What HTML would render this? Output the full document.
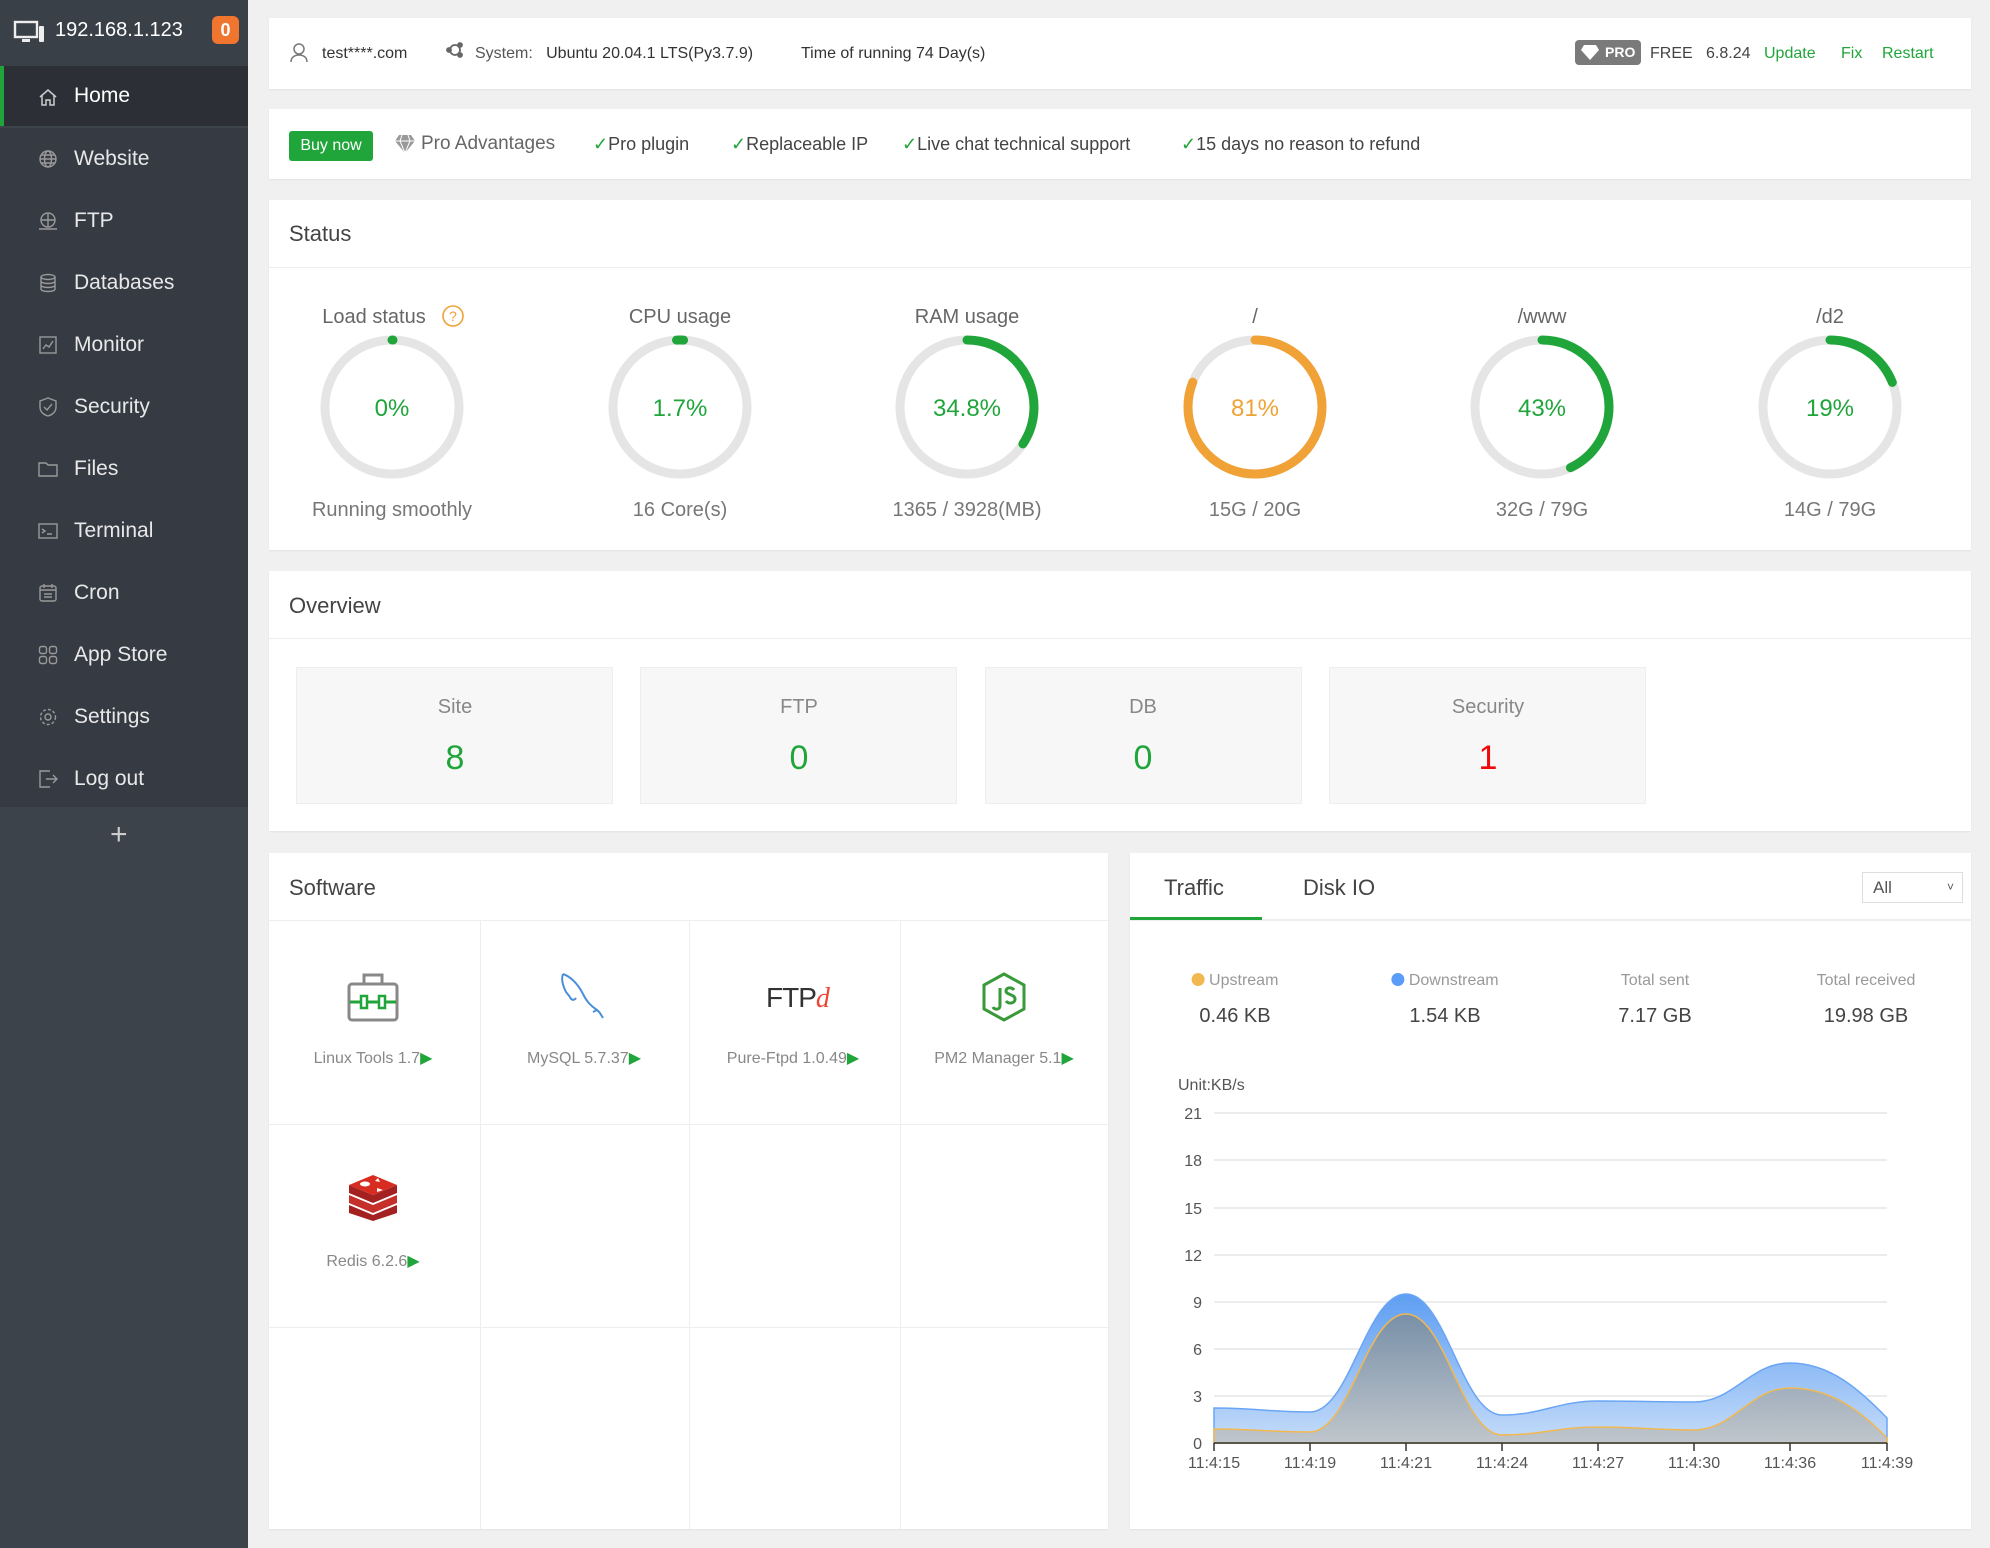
<!DOCTYPE html>
<html><head><meta charset="utf-8">
<style>
*{margin:0;padding:0;box-sizing:border-box}
body{width:1990px;height:1548px;background:#f0f0f0;font-family:"Liberation Sans",sans-serif;position:relative;overflow:hidden;color:#555}
.a{position:absolute;white-space:nowrap}
.card{position:absolute;background:#fff;box-shadow:0 1px 2px rgba(0,0,0,.06)}
#side{position:absolute;left:0;top:0;width:248px;height:1548px;background:#3d434b}
.nav{position:absolute;left:0;width:248px;height:62px;background:#363b43;color:#e8e8e8;font-size:21px;line-height:62px;padding-left:74px}
.nav svg{position:absolute;left:38px;top:21px}
.ct{text-align:center;transform:translateX(-50%)}
.hd{font-size:22px;color:#444}
.line{position:absolute;height:1px;background:#eceef0}
.g{color:#20a53a}
</style></head><body>
<div id="side">
 <div class="a" style="left:0;top:0;width:248px;height:66px;background:#3a4048"></div>
 <svg class="a" style="left:13px;top:20px" width="34" height="26" viewBox="0 0 34 26"><rect x="2" y="2" width="22" height="15" fill="none" stroke="#eee" stroke-width="2.4"/><rect x="9" y="19" width="8" height="3" fill="#eee"/><rect x="26" y="6" width="5" height="16" rx="1" fill="#eee"/></svg>
 <div class="a" style="left:55px;top:19px;font-size:20px;color:#fff">192.168.1.123</div>
 <div class="a" style="left:212px;top:16px;width:27px;height:28px;border-radius:6px;background:#f0752f;color:#fff;font-size:18px;font-weight:bold;text-align:center;line-height:28px">0</div>
 <div class="nav" style="top:66px;height:60px;background:#2c3036;border-left:4px solid #20a53a;padding-left:70px;color:#fff;line-height:60px"><svg style="left:34px" width="20" height="20" viewBox="0 0 20 20" fill="none" stroke="#ccc" stroke-width="1.5"><path d="M2 10 10 3l8 7M4 8v10h4v-5h4v5h4V8"/></svg>Home</div>
 <div class="nav" style="top:128px"><svg width="20" height="20" viewBox="0 0 20 20" fill="none" stroke="#999" stroke-width="1.4"><circle cx="10" cy="10" r="8"/><ellipse cx="10" cy="10" rx="3.5" ry="8"/><path d="M2 10h16M3.5 6h13M3.5 14h13"/></svg>Website</div>
 <div class="nav" style="top:190px"><svg width="20" height="20" viewBox="0 0 20 20" fill="none" stroke="#999" stroke-width="1.4"><circle cx="10" cy="9" r="7"/><path d="M3 9h14M10 2v14M1 18h18"/></svg>FTP</div>
 <div class="nav" style="top:252px"><svg width="20" height="20" viewBox="0 0 20 20" fill="none" stroke="#999" stroke-width="1.4"><ellipse cx="10" cy="4" rx="7" ry="2.5"/><path d="M3 4v12c0 1.5 3 2.5 7 2.5s7-1 7-2.5V4M3 8c0 1.5 3 2.5 7 2.5s7-1 7-2.5M3 12c0 1.5 3 2.5 7 2.5s7-1 7-2.5"/></svg>Databases</div>
 <div class="nav" style="top:314px"><svg width="20" height="20" viewBox="0 0 20 20" fill="none" stroke="#999" stroke-width="1.4"><rect x="2" y="2" width="16" height="16"/><path d="M5 14l3-4 3 2 4-6"/></svg>Monitor</div>
 <div class="nav" style="top:376px"><svg width="20" height="20" viewBox="0 0 20 20" fill="none" stroke="#999" stroke-width="1.4"><path d="M10 1 2 4v6c0 5 4 8 8 9 4-1 8-4 8-9V4z"/><path d="M6 10l3 3 5-6"/></svg>Security</div>
 <div class="nav" style="top:438px"><svg width="20" height="20" viewBox="0 0 20 20" fill="none" stroke="#999" stroke-width="1.4"><path d="M1 4h7l2 2h9v11H1z"/></svg>Files</div>
 <div class="nav" style="top:500px"><svg width="20" height="20" viewBox="0 0 20 20" fill="none" stroke="#999" stroke-width="1.4"><rect x="1" y="3" width="18" height="14"/><path d="M4 8l3 2-3 2M9 13h5"/></svg>Terminal</div>
 <div class="nav" style="top:562px"><svg width="20" height="20" viewBox="0 0 20 20" fill="none" stroke="#999" stroke-width="1.4"><rect x="2" y="3" width="16" height="15" rx="2"/><path d="M2 7h16M6 1v4M14 1v4M6 11h8M6 14h8"/></svg>Cron</div>
 <div class="nav" style="top:624px"><svg width="20" height="20" viewBox="0 0 20 20" fill="none" stroke="#999" stroke-width="1.4"><rect x="1.5" y="1.5" width="7" height="7" rx="2"/><rect x="11.5" y="1.5" width="7" height="7" rx="2"/><rect x="1.5" y="11.5" width="7" height="7" rx="2"/><rect x="11.5" y="11.5" width="7" height="7" rx="2"/></svg>App Store</div>
 <div class="nav" style="top:686px"><svg width="20" height="20" viewBox="0 0 20 20" fill="none" stroke="#999" stroke-width="1.4"><circle cx="10" cy="10" r="3"/><circle cx="10" cy="10" r="7.5" stroke-dasharray="3 2"/></svg>Settings</div>
 <div class="nav" style="top:748px;height:59px"><svg width="20" height="20" viewBox="0 0 20 20" fill="none" stroke="#999" stroke-width="1.4"><path d="M12 2H2v16h10M8 10h11M15 6l4 4-4 4"/></svg>Log out</div>
 <div class="a" style="left:110px;top:818px;font-size:30px;color:#ccc">+</div>
</div>

<!-- top bar -->
<div class="card" style="left:269px;top:18px;width:1702px;height:71px"></div>
<svg class="a" style="left:290px;top:43px" width="18" height="20" viewBox="0 0 18 20" fill="none" stroke="#777" stroke-width="1.5"><circle cx="9" cy="6" r="5"/><path d="M1 19c0-5 4-7 8-7s8 2 8 7"/></svg>
<div class="a" style="left:322px;top:45px;font-size:16px;color:#333">test****.com</div>
<svg class="a" style="left:446px;top:41px" width="18" height="18" viewBox="0 0 18 18" fill="none" stroke="#666" stroke-width="1.8"><circle cx="9" cy="9" r="5"/><circle cx="14" cy="4" r="2" fill="#666"/><circle cx="3" cy="9" r="2" fill="#666"/><circle cx="14" cy="14" r="2" fill="#666"/></svg>
<div class="a" style="left:475px;top:45px;font-size:16px;color:#555">System:&nbsp;&nbsp; <span style="color:#333">Ubuntu 20.04.1 LTS(Py3.7.9)</span></div>
<div class="a" style="left:801px;top:45px;font-size:16px;color:#333">Time of running 74 Day(s)</div>
<div class="a" style="left:1575px;top:40px;width:66px;height:25px;background:#7a7a7a;border-radius:4px;color:#fff;font-size:14px;font-weight:bold;line-height:25px;padding-left:30px">PRO</div>
<svg class="a" style="left:1581px;top:45px" width="18" height="15" viewBox="0 0 18 15"><path d="M3 0h12l3 5-9 10L0 5z" fill="#fff"/></svg>
<div class="a" style="left:1650px;top:45px;font-size:16px;color:#444">FREE&nbsp;&nbsp; 6.8.24</div>
<div class="a g" style="left:1764px;top:45px;font-size:16px">Update</div>
<div class="a g" style="left:1841px;top:45px;font-size:16px">Fix</div>
<div class="a g" style="left:1882px;top:45px;font-size:16px">Restart</div>

<!-- buy row -->
<div class="card" style="left:269px;top:109px;width:1702px;height:70px"></div>
<div class="a" style="left:289px;top:131px;width:84px;height:30px;background:#20a53a;border-radius:3px;color:#fff;font-size:16px;line-height:30px;text-align:center">Buy now</div>
<svg class="a" style="left:394px;top:134px" width="22" height="20" viewBox="0 0 22 20"><path d="M5 1h12l4 6-10 12L1 7z" fill="#999"/><path d="M1 7h20M8 1 6 7l5 12 5-12-2-6" stroke="#fff" fill="none" stroke-width="1"/></svg>
<div class="a" style="left:421px;top:133px;font-size:19px;color:#666">Pro Advantages</div>
<div class="a" style="left:593px;top:134px;font-size:18px;color:#444"><span class="g">✓</span>Pro plugin</div>
<div class="a" style="left:731px;top:134px;font-size:18px;color:#444"><span class="g">✓</span>Replaceable IP</div>
<div class="a" style="left:902px;top:134px;font-size:18px;color:#444"><span class="g">✓</span>Live chat technical support</div>
<div class="a" style="left:1181px;top:134px;font-size:18px;color:#444"><span class="g">✓</span>15 days no reason to refund</div>

<!-- status -->
<div class="card" style="left:269px;top:200px;width:1702px;height:350px"></div>
<div class="a hd" style="left:289px;top:221px">Status</div>
<div class="line" style="left:269px;top:267px;width:1702px"></div>
<svg class="a" style="left:269px;top:200px" width="1702" height="350">
 <g font-family="Liberation Sans, sans-serif" text-anchor="middle">
 <g transform="translate(123,207)"><circle r="67" fill="none" stroke="#e5e5e5" stroke-width="9"/><circle r="67" fill="none" stroke="#20a53a" stroke-width="9" stroke-linecap="round" stroke-dasharray="1 500" transform="rotate(-90)"/><text y="9" font-size="24" fill="#20a53a">0%</text><text y="-84" x="-18" font-size="20" fill="#666">Load status</text><circle cx="61" cy="-91" r="10" fill="none" stroke="#f0a236" stroke-width="1.6"/><text x="61" y="-86" font-size="14" fill="#f0a236">?</text><text y="109" font-size="20" fill="#777">Running smoothly</text></g>
 <g transform="translate(411,207)"><circle r="67" fill="none" stroke="#e5e5e5" stroke-width="9"/><circle r="67" fill="none" stroke="#20a53a" stroke-width="9" stroke-linecap="round" stroke-dasharray="7.1 500" transform="rotate(-93)"/><text y="9" font-size="24" fill="#20a53a">1.7%</text><text y="-84" font-size="20" fill="#666">CPU usage</text><text y="109" font-size="20" fill="#777">16 Core(s)</text></g>
 <g transform="translate(698,207)"><circle r="67" fill="none" stroke="#e5e5e5" stroke-width="9"/><circle r="67" fill="none" stroke="#20a53a" stroke-width="9" stroke-linecap="round" stroke-dasharray="144.3 500" transform="rotate(-90)"/><text y="9" font-size="24" fill="#20a53a">34.8%</text><text y="-84" font-size="20" fill="#666">RAM usage</text><text y="109" font-size="20" fill="#777">1365 / 3928(MB)</text></g>
 <g transform="translate(986,207)"><circle r="67" fill="none" stroke="#e5e5e5" stroke-width="9"/><circle r="67" fill="none" stroke="#f0a236" stroke-width="9" stroke-linecap="round" stroke-dasharray="341 500" transform="rotate(-90)"/><text y="9" font-size="24" fill="#f0a236">81%</text><text y="-84" font-size="20" fill="#666">/</text><text y="109" font-size="20" fill="#777">15G / 20G</text></g>
 <g transform="translate(1273,207)"><circle r="67" fill="none" stroke="#e5e5e5" stroke-width="9"/><circle r="67" fill="none" stroke="#20a53a" stroke-width="9" stroke-linecap="round" stroke-dasharray="181 500" transform="rotate(-90)"/><text y="9" font-size="24" fill="#20a53a">43%</text><text y="-84" font-size="20" fill="#666">/www</text><text y="109" font-size="20" fill="#777">32G / 79G</text></g>
 <g transform="translate(1561,207)"><circle r="67" fill="none" stroke="#e5e5e5" stroke-width="9"/><circle r="67" fill="none" stroke="#20a53a" stroke-width="9" stroke-linecap="round" stroke-dasharray="80 500" transform="rotate(-90)"/><text y="9" font-size="24" fill="#20a53a">19%</text><text y="-84" font-size="20" fill="#666">/d2</text><text y="109" font-size="20" fill="#777">14G / 79G</text></g>
 </g>
</svg>

<!-- overview -->
<div class="card" style="left:269px;top:571px;width:1702px;height:260px"></div>
<div class="a hd" style="left:289px;top:593px">Overview</div>
<div class="line" style="left:269px;top:638px;width:1702px"></div>
<div class="a" style="left:296px;top:667px;width:317px;height:137px;background:#f7f7f7;border:1px solid #eee"></div>
<div class="a" style="left:640px;top:667px;width:317px;height:137px;background:#f7f7f7;border:1px solid #eee"></div>
<div class="a" style="left:985px;top:667px;width:317px;height:137px;background:#f7f7f7;border:1px solid #eee"></div>
<div class="a" style="left:1329px;top:667px;width:317px;height:137px;background:#f7f7f7;border:1px solid #eee"></div>
<div class="a ct" style="left:455px;top:696px;font-size:20px;color:#888">Site</div>
<div class="a ct" style="left:799px;top:696px;font-size:20px;color:#888">FTP</div>
<div class="a ct" style="left:1143px;top:696px;font-size:20px;color:#888">DB</div>
<div class="a ct" style="left:1488px;top:696px;font-size:20px;color:#888">Security</div>
<div class="a ct g" style="left:455px;top:739px;font-size:34px">8</div>
<div class="a ct g" style="left:799px;top:739px;font-size:34px">0</div>
<div class="a ct g" style="left:1143px;top:739px;font-size:34px">0</div>
<div class="a ct" style="left:1488px;top:739px;font-size:34px;color:#ef0808">1</div>

<!-- software -->
<div class="card" style="left:269px;top:853px;width:839px;height:676px"></div>
<div class="a hd" style="left:289px;top:875px">Software</div>
<div class="line" style="left:269px;top:920px;width:839px"></div>
<div class="line" style="left:269px;top:1124px;width:839px"></div>
<div class="line" style="left:269px;top:1327px;width:839px"></div>
<div class="a" style="left:480px;top:921px;width:1px;height:608px;background:#eceef0"></div>
<div class="a" style="left:689px;top:921px;width:1px;height:608px;background:#eceef0"></div>
<div class="a" style="left:900px;top:921px;width:1px;height:608px;background:#eceef0"></div>
<svg class="a" style="left:347px;top:972px" width="52" height="50" viewBox="0 0 52 50"><rect x="2" y="12" width="48" height="36" rx="3" fill="none" stroke="#888" stroke-width="3"/><path d="M17 12V3h18v9" fill="none" stroke="#888" stroke-width="3"/><path d="M3 30h46" stroke="#20a53a" stroke-width="3"/><rect x="14" y="24" width="6" height="12" fill="#fff" stroke="#20a53a" stroke-width="2.5"/><rect x="32" y="24" width="6" height="12" fill="#fff" stroke="#20a53a" stroke-width="2.5"/></svg>
<div class="a ct" style="left:373px;top:1048px;font-size:16px;color:#888">Linux Tools 1.7<span class="g">▶</span></div>
<svg class="a" style="left:559px;top:972px" width="50" height="50" viewBox="0 0 50 50" fill="none" stroke="#4a90d9" stroke-width="2"><path d="M4 2c6 2 14 8 20 20 4 8 8 12 14 16 3 2 4 5 6 8M4 2c-2 5 0 12 3 18l4 5M11 25c1 3 4 4 6 1M38 38l-4 2"/></svg>
<div class="a ct" style="left:584px;top:1048px;font-size:16px;color:#888">MySQL 5.7.37<span class="g">▶</span></div>
<div class="a" style="left:766px;top:982px;font-size:28px;color:#333;letter-spacing:-1px">FTP<span style="color:#e43;font-style:italic;font-family:'Liberation Serif',serif">d</span></div>
<div class="a ct" style="left:793px;top:1048px;font-size:16px;color:#888">Pure-Ftpd 1.0.49<span class="g">▶</span></div>
<svg class="a" style="left:981px;top:972px" width="46" height="50" viewBox="0 0 46 50" fill="none" stroke="#3a9a3a" stroke-width="3"><path d="M23 2 43 13v24L23 48 3 37V13z"/><path d="M19 16v18c0 4-6 4-7 1M33 18c-2-3-8-3-8 1s9 3 9 8-7 5-9 2"/></svg>
<div class="a ct" style="left:1004px;top:1048px;font-size:16px;color:#888">PM2 Manager 5.1<span class="g">▶</span></div>
<svg class="a" style="left:347px;top:1175px" width="52" height="46" viewBox="0 0 52 46"><path d="M2 30l24 10 24-10v8L26 46 2 38z" fill="#a42122"/><path d="M2 20l24 10 24-10v8L26 38 2 28z" fill="#c6302b"/><path d="M2 10l24 10 24-10v8L26 28 2 18z" fill="#a42122"/><path d="M2 10 26 0l24 10-24 10z" fill="#d82c20"/><ellipse cx="18" cy="9" rx="5" ry="2.5" fill="#fff"/><path d="M28 6l3-3 2 4zM30 13l6 2-6 2z" fill="#fff"/></svg>
<div class="a ct" style="left:373px;top:1251px;font-size:16px;color:#888">Redis 6.2.6<span class="g">▶</span></div>

<!-- traffic -->
<div class="card" style="left:1130px;top:853px;width:841px;height:676px"></div>
<div class="line" style="left:1130px;top:919px;width:841px;height:2px"></div>
<div class="a" style="left:1130px;top:917px;width:132px;height:3px;background:#20a53a"></div>
<div class="a" style="left:1164px;top:875px;font-size:22px;color:#444">Traffic</div>
<div class="a" style="left:1303px;top:875px;font-size:22px;color:#444">Disk IO</div>
<div class="a" style="left:1862px;top:872px;width:101px;height:31px;border:1px solid #ddd;font-size:17px;color:#555;line-height:29px;padding-left:10px">All<span style="position:absolute;right:8px;font-size:12px">&#x2C5;</span></div>
<div class="a ct" style="left:1235px;top:972px;font-size:16px;color:#999"><span style="display:inline-block;width:13px;height:13px;border-radius:50%;background:#f2b850;vertical-align:-1px"></span> Upstream</div>
<div class="a ct" style="left:1445px;top:972px;font-size:16px;color:#999"><span style="display:inline-block;width:13px;height:13px;border-radius:50%;background:#5b9cf8;vertical-align:-1px"></span> Downstream</div>
<div class="a ct" style="left:1655px;top:972px;font-size:16px;color:#999">Total sent</div>
<div class="a ct" style="left:1866px;top:972px;font-size:16px;color:#999">Total received</div>
<div class="a ct" style="left:1235px;top:1005px;font-size:20px;color:#444">0.46 KB</div>
<div class="a ct" style="left:1445px;top:1005px;font-size:20px;color:#444">1.54 KB</div>
<div class="a ct" style="left:1655px;top:1005px;font-size:20px;color:#444">7.17 GB</div>
<div class="a ct" style="left:1866px;top:1005px;font-size:20px;color:#444">19.98 GB</div>
<svg class="a" style="left:0;top:0" width="1990" height="1548" font-family="Liberation Sans, sans-serif">
 <defs>
  <linearGradient id="gu" x1="0" y1="0" x2="0" y2="1"><stop offset="0" stop-color="#7890a8"/><stop offset="1" stop-color="#c0c6cc"/></linearGradient>
  <linearGradient id="gd" x1="0" y1="0" x2="0" y2="1"><stop offset="0" stop-color="#5e9ef2"/><stop offset="1" stop-color="#c5dcf9"/></linearGradient>
 </defs>
 <text x="1178" y="1090" font-size="16" fill="#555">Unit:KB/s</text>
 <g stroke="#e6e6e6" stroke-width="1.5">
  <path d="M1214 1113H1887M1214 1160H1887M1214 1208H1887M1214 1255H1887M1214 1302H1887M1214 1349H1887M1214 1396H1887"/>
 </g>
 <g font-size="16" fill="#555" text-anchor="end">
  <text x="1202" y="1119">21</text><text x="1202" y="1166">18</text><text x="1202" y="1214">15</text><text x="1202" y="1261">12</text><text x="1202" y="1308">9</text><text x="1202" y="1355">6</text><text x="1202" y="1402">3</text><text x="1202" y="1449">0</text>
 </g>
 <path d="M1214 1408C1254 1408 1270 1412 1310 1412C1350 1412 1366 1294 1406 1294C1446 1294 1462 1415 1502 1415C1542 1415 1558 1401 1598 1401C1638 1401 1654 1402 1694 1402C1734 1402 1750 1363 1790 1363C1830 1363 1860 1390 1887 1418L1887 1443L1214 1443Z" fill="url(#gd)" stroke="#6aa5f5" stroke-width="1.5"/>
 <path d="M1214 1429C1254 1429 1270 1432 1310 1432C1350 1432 1366 1314 1406 1314C1446 1314 1462 1435 1502 1435C1542 1435 1558 1427 1598 1427C1638 1427 1654 1430 1694 1430C1734 1430 1750 1388 1790 1388C1830 1388 1860 1410 1887 1438L1887 1443L1214 1443Z" fill="url(#gu)" stroke="#f2b850" stroke-width="1.5"/>
 <path d="M1214 1443H1887M1214 1443v8M1310 1443v8M1406 1443v8M1502 1443v8M1598 1443v8M1694 1443v8M1790 1443v8M1887 1443v8" stroke="#333" stroke-width="1.5"/>
 <g font-size="16" fill="#555" text-anchor="middle">
  <text x="1214" y="1468">11:4:15</text><text x="1310" y="1468">11:4:19</text><text x="1406" y="1468">11:4:21</text><text x="1502" y="1468">11:4:24</text><text x="1598" y="1468">11:4:27</text><text x="1694" y="1468">11:4:30</text><text x="1790" y="1468">11:4:36</text><text x="1887" y="1468">11:4:39</text>
 </g>
</svg>
</body></html>
